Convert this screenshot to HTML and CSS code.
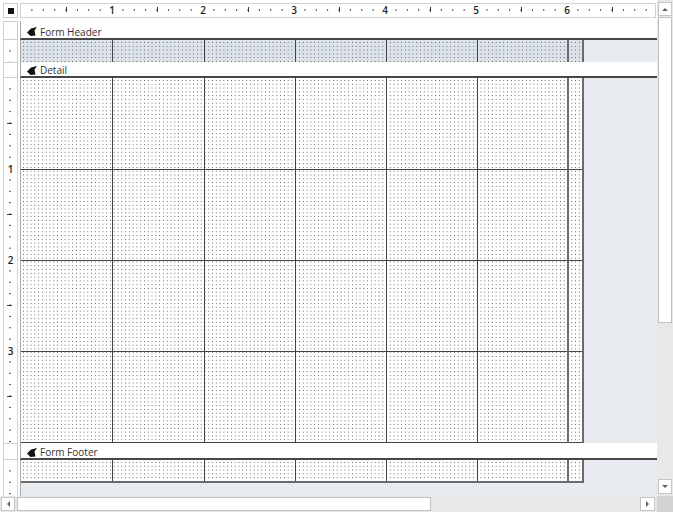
FILE: index.html
```html
<!DOCTYPE html>
<html>
<head>
<meta charset="utf-8">
<title>Form Design</title>
<link rel="stylesheet" href="styles.css">
</head>
<body>
<div class="window">
  <div class="main">
    <div class="row top-row">
      <div class="corner"><div class="corner-box"><span class="corner-sq"></span></div></div>
      <div class="hruler">
        <div class="hruler-strip">
          <span class="hr-cell"><span class="hr-num">1</span></span>
          <span class="hr-cell"><span class="hr-num">2</span></span>
          <span class="hr-cell"><span class="hr-num">3</span></span>
          <span class="hr-cell"><span class="hr-num">4</span></span>
          <span class="hr-cell"><span class="hr-num">5</span></span>
          <span class="hr-cell"><span class="hr-num">6</span></span>
        </div>
      </div>
    </div>

    <div class="row bar-h">
      <div class="vruler"><div class="selector"></div></div>
      <div class="content bar">
        <svg class="bar-icon" viewBox="0 0 10 9" width="10" height="9"><path d="M0 5.5 L4 1.5 L10 0 L7.5 3.5 L8.5 8.5 L3.5 9 Z"/></svg>
        <span class="bar-label">Form Header</span>
      </div>
    </div>
    <div class="row sec-h">
      <div class="vruler"><div class="vstrip"></div></div>
      <div class="content sec"><div class="grid grid-header"></div></div>
    </div>

    <div class="row bar-d">
      <div class="vruler"><div class="selector"></div></div>
      <div class="content bar">
        <svg class="bar-icon" viewBox="0 0 10 9" width="10" height="9"><path d="M0 5.5 L4 1.5 L10 0 L7.5 3.5 L8.5 8.5 L3.5 9 Z"/></svg>
        <span class="bar-label">Detail</span>
      </div>
    </div>
    <div class="row sec-d">
      <div class="vruler">
        <div class="vstrip">
          <span class="vr-cell"><span class="vr-num">1</span></span>
          <span class="vr-cell"><span class="vr-num">2</span></span>
          <span class="vr-cell"><span class="vr-num">3</span></span>
        </div>
      </div>
      <div class="content sec"><div class="grid grid-detail"></div></div>
    </div>

    <div class="row bar-f">
      <div class="vruler"><div class="selector"></div></div>
      <div class="content bar">
        <svg class="bar-icon" viewBox="0 0 10 9" width="10" height="9"><path d="M0 5.5 L4 1.5 L10 0 L7.5 3.5 L8.5 8.5 L3.5 9 Z"/></svg>
        <span class="bar-label">Form Footer</span>
      </div>
    </div>
    <div class="row sec-f">
      <div class="vruler"><div class="vstrip"></div></div>
      <div class="content sec-col">
        <div class="sec sec-footer"><div class="grid grid-footer"></div></div>
        <div class="below"></div>
      </div>
    </div>
  </div>

  <div class="vscroll">
    <div class="sb-btn sb-up"><svg viewBox="0 0 6 3" width="6" height="3"><polygon points="0,3 3,0 6,3"/></svg></div>
    <div class="vthumb"></div>
    <div class="sb-track"></div>
    <div class="sb-btn sb-down"><svg viewBox="0 0 6 3" width="6" height="3"><polygon points="0,0 6,0 3,3"/></svg></div>
  </div>

  <div class="hscroll">
    <div class="sb-btn sb-left"><svg viewBox="0 0 3 6" width="3" height="6"><polygon points="3,0 3,6 0,3"/></svg></div>
    <div class="hthumb"></div>
    <div class="sb-track"></div>
    <div class="sb-btn sb-right"><svg viewBox="0 0 3 6" width="3" height="6"><polygon points="0,0 3,3 0,6"/></svg></div>
  </div>

  <div class="sb-corner"></div>
</div>
</body>
</html>
```

FILE: styles.css
```css
* { box-sizing: border-box; margin: 0; padding: 0; }

html, body {
  width: 673px;
  height: 512px;
  overflow: hidden;
  background: #fff;
}

body {
  font-family: "Open Sans", "Noto Sans", sans-serif;
  color: #333;
}

.window {
  display: grid;
  grid-template-columns: 657px 16px;
  grid-template-rows: 496px 16px;
  width: 673px;
  height: 512px;
}

.main {
  display: flex;
  flex-direction: column;
  overflow: hidden;
  min-height: 0;
  background: #fff;
}

.row { display: flex; flex: none; }

/* ---------- top ruler ---------- */
.top-row { height: 21px; }

.corner {
  width: 20px;
  flex: none;
  padding: 3px 2px 3px 3px;
}

.corner-box {
  width: 15px;
  height: 15px;
  border: 1px solid #cdcdcd;
  display: flex;
  align-items: center;
  justify-content: center;
}

.corner-sq {
  width: 6px;
  height: 6px;
  background: #111;
}

.hruler {
  flex: 1;
  min-width: 0;
  padding: 3px 1px 3px 0;
}

.hruler-strip {
  height: 15px;
  border: 1px solid #d2d2d2;
  display: flex;
  overflow: hidden;
  background-image:
    linear-gradient(to right, transparent 45px, #3a3a3a 45px, #3a3a3a 46px, transparent 46px),
    linear-gradient(to right, transparent 10.375px, #4a4a4a 10.375px);
  background-size: 91px 5px, 11.375px 2px;
  background-position: 0 3px, 0 5px;
  background-repeat: repeat-x;
}

.hr-cell {
  width: 91px;
  flex: none;
  display: flex;
  justify-content: flex-end;
  align-items: center;
}

.hr-num {
  width: 8px;
  margin-right: -4px;
  text-align: center;
  background: #fff;
  font-size: 10px;
  line-height: 11px;
  font-weight: 600;
  color: #1e1e1e;
}

/* ---------- vertical ruler ---------- */
.vruler {
  width: 20px;
  flex: none;
  padding: 0 2px 0 3px;
  background: #fff;
}

.selector {
  height: 100%;
  border: 1px solid #cdcdcd;
  background: #fff;
}

.vstrip {
  height: 100%;
  border-left: 1px solid #d2d2d2;
  border-right: 1px solid #d2d2d2;
  display: flex;
  flex-direction: column;
  background-image:
    linear-gradient(to bottom, transparent 45px, #3a3a3a 45px, #3a3a3a 46px, transparent 46px),
    linear-gradient(to bottom, transparent 10.375px, #4a4a4a 10.375px);
  background-size: 5px 91px, 2px 11.375px;
  background-position: 3px 0, 5px 0;
  background-repeat: repeat-y;
}

.vr-cell {
  height: 91px;
  flex: none;
  display: flex;
  align-items: flex-end;
  justify-content: center;
}

.vr-num {
  width: 100%;
  height: 9px;
  margin-bottom: -4.5px;
  text-align: center;
  background: #fff;
  font-size: 10px;
  line-height: 9px;
  font-weight: 600;
  color: #1e1e1e;
}

/* ---------- sections ---------- */
.content {
  flex: 1;
  min-width: 0;
  border-left: 1px solid #a8a8a8;
}

.bar {
  display: flex;
  align-items: center;
  gap: 3px;
  padding-left: 6px;
  background: #fff;
  border-bottom: 2px solid #474747;
  font-size: 10px;
  color: #333;
}

.bar-icon { fill: #111; flex: none; }

.bar-label { white-space: nowrap; line-height: 12px; }

.bar-h { height: 19px; }
.bar-h .bar { padding-top: 4px; }
.bar-d { height: 16px; }
.bar-d .bar { padding-top: 2px; }
.bar-f { height: 17px; }
.bar-f .bar { padding-top: 3px; }

.sec-h { height: 22px; }
.sec-d { height: 365px; }
.sec-f { height: 36px; }

.sec {
  display: flex;
  background: #e8ecf1;
}

.sec-col {
  display: flex;
  flex-direction: column;
}

.sec-footer {
  height: 23px;
  flex: none;
}

.below {
  flex: 1;
  background: #e8ecf1;
}

.grid {
  width: 563px;
  flex: none;
  border-right: 2px solid #6b6b6b;
  --vlines: linear-gradient(to right,
    transparent 91px, #444 91px 92px,
    transparent 92px 183px, #444 183px 184px,
    transparent 184px 274px, #444 274px 275px,
    transparent 275px 365px, #444 365px 366px,
    transparent 366px 456px, #444 456px 457px,
    transparent 457px 546px, #6b6b6b 546px 548px,
    transparent 548px);
  --dots: conic-gradient(from 270deg at 1px 1px, #5e5e5e 90deg, transparent 0);
  background-image: var(--vlines), var(--dots);
  background-size: 100% 100%, 3.7917px 3.7917px;
  background-position: 0 0, 2px 2px;
  background-repeat: no-repeat, repeat;
}

.grid-header { background-color: #dce2ea; }

.grid-footer {
  background-color: #fff;
  border-bottom: 2px solid #6b6b6b;
}

.grid-detail {
  background-color: #fff;
  background-image:
    var(--vlines),
    linear-gradient(to bottom,
      transparent 91px, #444 91px 92px,
      transparent 92px 182px, #444 182px 183px,
      transparent 183px 273px, #444 273px 274px,
      transparent 274px 364px, #444 364px 365px),
    var(--dots);
  background-size: 100% 100%, 100% 100%, 3.7917px 3.7917px;
  background-position: 0 0, 0 0, 2px 2px;
  background-repeat: no-repeat, no-repeat, repeat;
}

/* ---------- scrollbars ---------- */
.vscroll {
  grid-column: 2;
  grid-row: 1;
  display: flex;
  flex-direction: column;
  background: #e8e8e8;
  padding: 2px 1px 2px 1px;
}

.hscroll {
  grid-column: 1;
  grid-row: 2;
  display: flex;
  background: #e8e8e8;
  padding: 1px 2px 1px 1px;
}

.sb-btn {
  flex: none;
  background: #fff;
  border: 1px solid #c6c6c6;
  display: flex;
  align-items: center;
  justify-content: center;
}

.sb-btn svg { fill: #606060; }

.sb-up { height: 14px; }
.sb-down { height: 15px; }
.sb-left { width: 14px; }
.sb-right { width: 15px; }

.vthumb {
  flex: none;
  height: 306px;
  margin-top: 1px;
  background: #fff;
  border: 1px solid #c0c0c0;
}

.hthumb {
  flex: none;
  width: 414px;
  margin-left: 2px;
  background: #fff;
  border: 1px solid #c0c0c0;
}

.sb-track { flex: 1; }

.sb-corner {
  grid-column: 2;
  grid-row: 2;
  background: #d4d4d4;
}
```
